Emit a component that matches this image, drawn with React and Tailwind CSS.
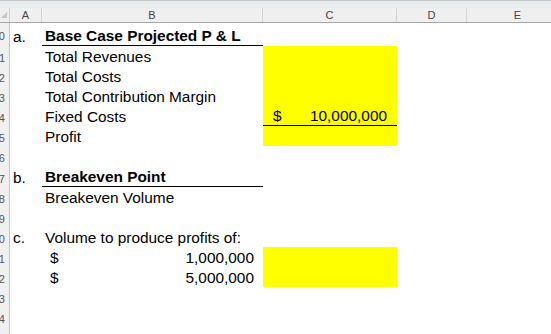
import React from "react";

const font = { fontFamily: '"Liberation Sans", Arial, sans-serif' };

function RowHead({ n }) {
  return (
    <div className="w-[10px] shrink-0 bg-[#f0f0f0] border-r border-[#c4c4c4] overflow-hidden flex items-center justify-end pr-[4px] pt-[4px] text-[11px] text-[#555] leading-none">
      {n}
    </div>
  );
}

function Row({ n, h = "h-[20px]", a, b, c, bClass = "", cClass = "" }) {
  return (
    <div className={`flex ${h}`}>
      <RowHead n={n} />
      <div className="w-[32px] shrink-0 flex items-end pl-[3px] leading-[18px]">{a}</div>
      <div className={`w-[221px] shrink-0 flex items-end leading-[18px] ${bClass}`}>{b}</div>
      <div className={`w-[134px] shrink-0 flex items-end leading-[18px] ${cClass}`}>{c}</div>
      <div className="w-[70px] shrink-0" />
      <div className="flex-1" />
    </div>
  );
}

function Money({ value, left = "pl-[10px]", right = "pr-[10px]" }) {
  return (
    <div className={`flex w-full justify-between ${left} ${right}`}>
      <span>$</span>
      <span>{value}</span>
    </div>
  );
}

export default function App() {
  const cols = [
    { label: "A", w: "w-[32px]" },
    { label: "B", w: "w-[221px]" },
    { label: "C", w: "w-[134px]" },
    { label: "D", w: "w-[70px]" },
    { label: "E", w: "w-[102px]" },
  ];

  return (
    <div className="w-[551px] h-[334px] bg-white overflow-hidden text-black text-[15.4px]" style={font}>
      <div className="h-[8px] border-t border-[#c6c6c6] bg-[#e8edf0]" />
      <div className="flex h-[15px] bg-[#efefef] border-b border-[#a6a6a6] text-[11px] text-[#444] leading-none">
        <div className="w-[10px] shrink-0 border-r border-[#d0d0d0] relative">
          <svg className="absolute left-0 top-[3px]" width="8" height="8" viewBox="0 0 8 8">
            <polygon points="7,1 7,7 1,7" fill="#c4c4c4" />
          </svg>
        </div>
        {cols.map((col) => (
          <div key={col.label} className={`${col.w} shrink-0 border-r border-[#d4d4d4] flex items-center justify-center pt-[1px]`}>
            {col.label}
          </div>
        ))}
        <div className="flex-1" />
      </div>

      <Row
        n="10"
        h="h-[23px]"
        a="a."
        b={<span className="font-bold pl-[3px]">Base Case Projected P &amp; L</span>}
        bClass="border-b border-black"
      />
      <Row n="11" b={<span className="pl-[3px]">Total Revenues</span>} cClass="bg-[#ffff00]" />
      <Row n="12" b={<span className="pl-[3px]">Total Costs</span>} cClass="bg-[#ffff00]" />
      <Row n="13" b={<span className="pl-[3px]">Total Contribution Margin</span>} cClass="bg-[#ffff00]" />
      <Row
        n="14"
        b={<span className="pl-[3px]">Fixed Costs</span>}
        c={<Money value="10,000,000" />}
        cClass="bg-[#ffff00] border-b border-black"
      />
      <Row n="15" b={<span className="pl-[3px]">Profit</span>} cClass="bg-[#ffff00]" />
      <Row n="16" h="h-[21px]" />
      <Row
        n="17"
        a="b."
        b={<span className="font-bold pl-[3px]">Breakeven Point</span>}
        bClass="border-b border-black"
      />
      <Row n="18" b={<span className="pl-[3px]">Breakeven Volume</span>} />
      <Row n="19" />
      <Row n="20" a="c." b={<span className="pl-[3px]">Volume to produce profits of:</span>} />
      <Row n="21" b={<Money value="1,000,000" left="pl-[8px]" right="pr-[9px]" />} cClass="bg-[#ffff00]" />
      <Row n="22" b={<Money value="5,000,000" left="pl-[8px]" right="pr-[9px]" />} cClass="bg-[#ffff00]" />
      <Row n="23" />
      <Row n="24" />
      <Row n="25" />
    </div>
  );
}
